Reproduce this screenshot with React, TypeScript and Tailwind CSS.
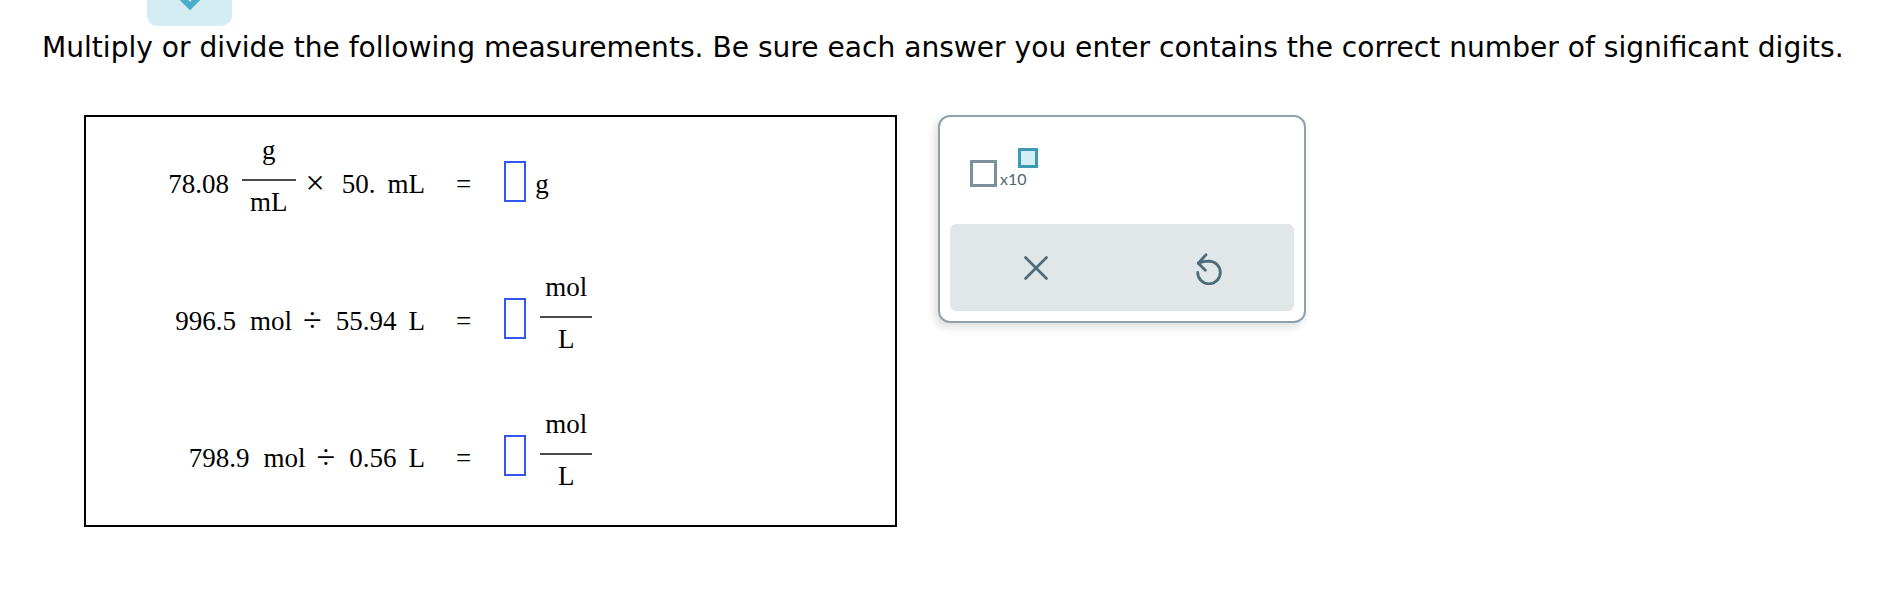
import React from 'react';

const serif = "font-['Liberation_Serif','Times_New_Roman',serif] text-[27px] text-black";

function Frac({ num, den, pad }: { num: string; den: string; pad: string }) {
  return (
    <div className="mb-[10px] flex flex-col items-stretch">
      <span className={`block h-[28px] text-center leading-[28px] ${pad}`}>{num}</span>
      <div className="mt-[15px] h-[2px] bg-[#4a4a4a]" />
      <span className={`mt-[7px] block h-[28px] text-center leading-[28px] ${pad}`}>{den}</span>
    </div>
  );
}

function Tok({ children, className = '' }: { children: React.ReactNode; className?: string }) {
  return <span className={`whitespace-nowrap pt-[6px] leading-[28px] ${className}`}>{children}</span>;
}

function Op({ children, className = '' }: { children: React.ReactNode; className?: string }) {
  return <span className={`whitespace-nowrap pt-[4px] text-[34px] leading-[28px] ${className}`}>{children}</span>;
}

function AnswerBox() {
  return <div className="ml-[33px] h-[41px] w-[22px] shrink-0 border-2 border-[#3157f0] bg-white" />;
}

function Equals() {
  return <Tok className="ml-[31px]">=</Tok>;
}

function UndoIcon() {
  return (
    <svg width="30" height="34" viewBox="0 0 30 34" fill="none" stroke="#4d6c79" strokeWidth="2.8" strokeLinecap="round" strokeLinejoin="round">
      <path d="M16 10.2 A11.3 11.3 0 1 1 4.7 21.5" />
      <path d="M16 10.2 C11 10.2 8 11 5.3 12.2" />
      <path d="M13 3.7 L5.3 12.2 L12.3 19.2" />
    </svg>
  );
}

function ClearIcon() {
  return (
    <svg width="24" height="24" viewBox="0 0 24 24" fill="none" stroke="#4d6c79" strokeWidth="2.6" strokeLinecap="round">
      <path d="M1.5 1.5 L22.5 22.5" />
      <path d="M22.5 1.5 L1.5 22.5" />
    </svg>
  );
}

export default function App() {
  return (
    <div className="min-h-screen w-full bg-white">
      {/* collapse toggle, cut off at the top */}
      <div className="ml-[147px] flex h-[26px] w-[85px] justify-center overflow-hidden rounded-b-[10px] bg-[#d4edf2]">
        <svg width="30" height="12" viewBox="0 0 30 12" fill="none" stroke="#4aadc9" strokeWidth="6">
          <path d="M3 -6 L15 6 L27 -6" />
        </svg>
      </div>

      <p className="mt-[6px] pl-[42px] font-['DejaVu_Sans','Verdana',sans-serif] text-[28.1px] leading-[32px] text-black whitespace-nowrap">
        Multiply or divide the following measurements. Be sure each answer you enter contains the correct number of significant digits.
      </p>

      <div className="mt-[51px] flex items-start pl-[84px]">
        {/* problems */}
        <div className={`flex h-[412px] w-[813px] flex-col gap-[65px] border-2 border-black pt-[28px] ${serif}`}>
          <div className="flex h-[72px] items-center">
            <div className="flex w-[339px] items-center justify-end">
              <Tok>78.08</Tok>
              <div className="ml-[13px]">
                <Frac num="g" den="mL" pad="px-[8px]" />
              </div>
              <Op className="ml-[10px]">×</Op>
              <Tok className="ml-[17px]">50.</Tok>
              <Tok className="ml-[12px]">mL</Tok>
            </div>
            <Equals />
            <AnswerBox />
            <Tok className="ml-[9px]">g</Tok>
          </div>

          <div className="flex h-[72px] items-center">
            <div className="flex w-[339px] items-center justify-end">
              <Tok>996.5</Tok>
              <Tok className="ml-[14px]">mol</Tok>
              <Op className="ml-[11px]">÷</Op>
              <Tok className="ml-[14px]">55.94</Tok>
              <Tok className="ml-[12px]">L</Tok>
            </div>
            <Equals />
            <AnswerBox />
            <div className="ml-[14px]">
              <Frac num="mol" den="L" pad="px-[5px]" />
            </div>
          </div>

          <div className="flex h-[72px] items-center">
            <div className="flex w-[339px] items-center justify-end">
              <Tok>798.9</Tok>
              <Tok className="ml-[14px]">mol</Tok>
              <Op className="ml-[11px]">÷</Op>
              <Tok className="ml-[14px]">0.56</Tok>
              <Tok className="ml-[12px]">L</Tok>
            </div>
            <Equals />
            <AnswerBox />
            <div className="ml-[14px]">
              <Frac num="mol" den="L" pad="px-[5px]" />
            </div>
          </div>
        </div>

        {/* answer keypad */}
        <div className="ml-[41px] flex h-[208px] w-[368px] flex-col rounded-[12px] border-2 border-[#8fa1aa] bg-white p-[10px] shadow-[-3px_4px_10px_rgba(0,0,0,0.14)]">
          <div className="flex h-[97px] items-start pl-[20px] pt-[21px]">
            <div className="mt-[12px] h-[27px] w-[27px] border-[3px] border-[#7b9099]" />
            <span className="ml-[3px] mt-[23px] w-[18px] whitespace-nowrap font-['Lato',sans-serif] text-[16px] leading-[16px] text-[#4e6673]">
              x10
            </span>
            <div className="h-[20px] w-[20px] border-[3px] border-[#3d9ab3] bg-[#d3eef4]" />
          </div>
          <div className="flex flex-1 rounded-[6px] bg-[#e1e6e9]">
            <button className="flex flex-1 items-center justify-center">
              <ClearIcon />
            </button>
            <button className="flex flex-1 items-center justify-center">
              <UndoIcon />
            </button>
          </div>
        </div>
      </div>
    </div>
  );
}
